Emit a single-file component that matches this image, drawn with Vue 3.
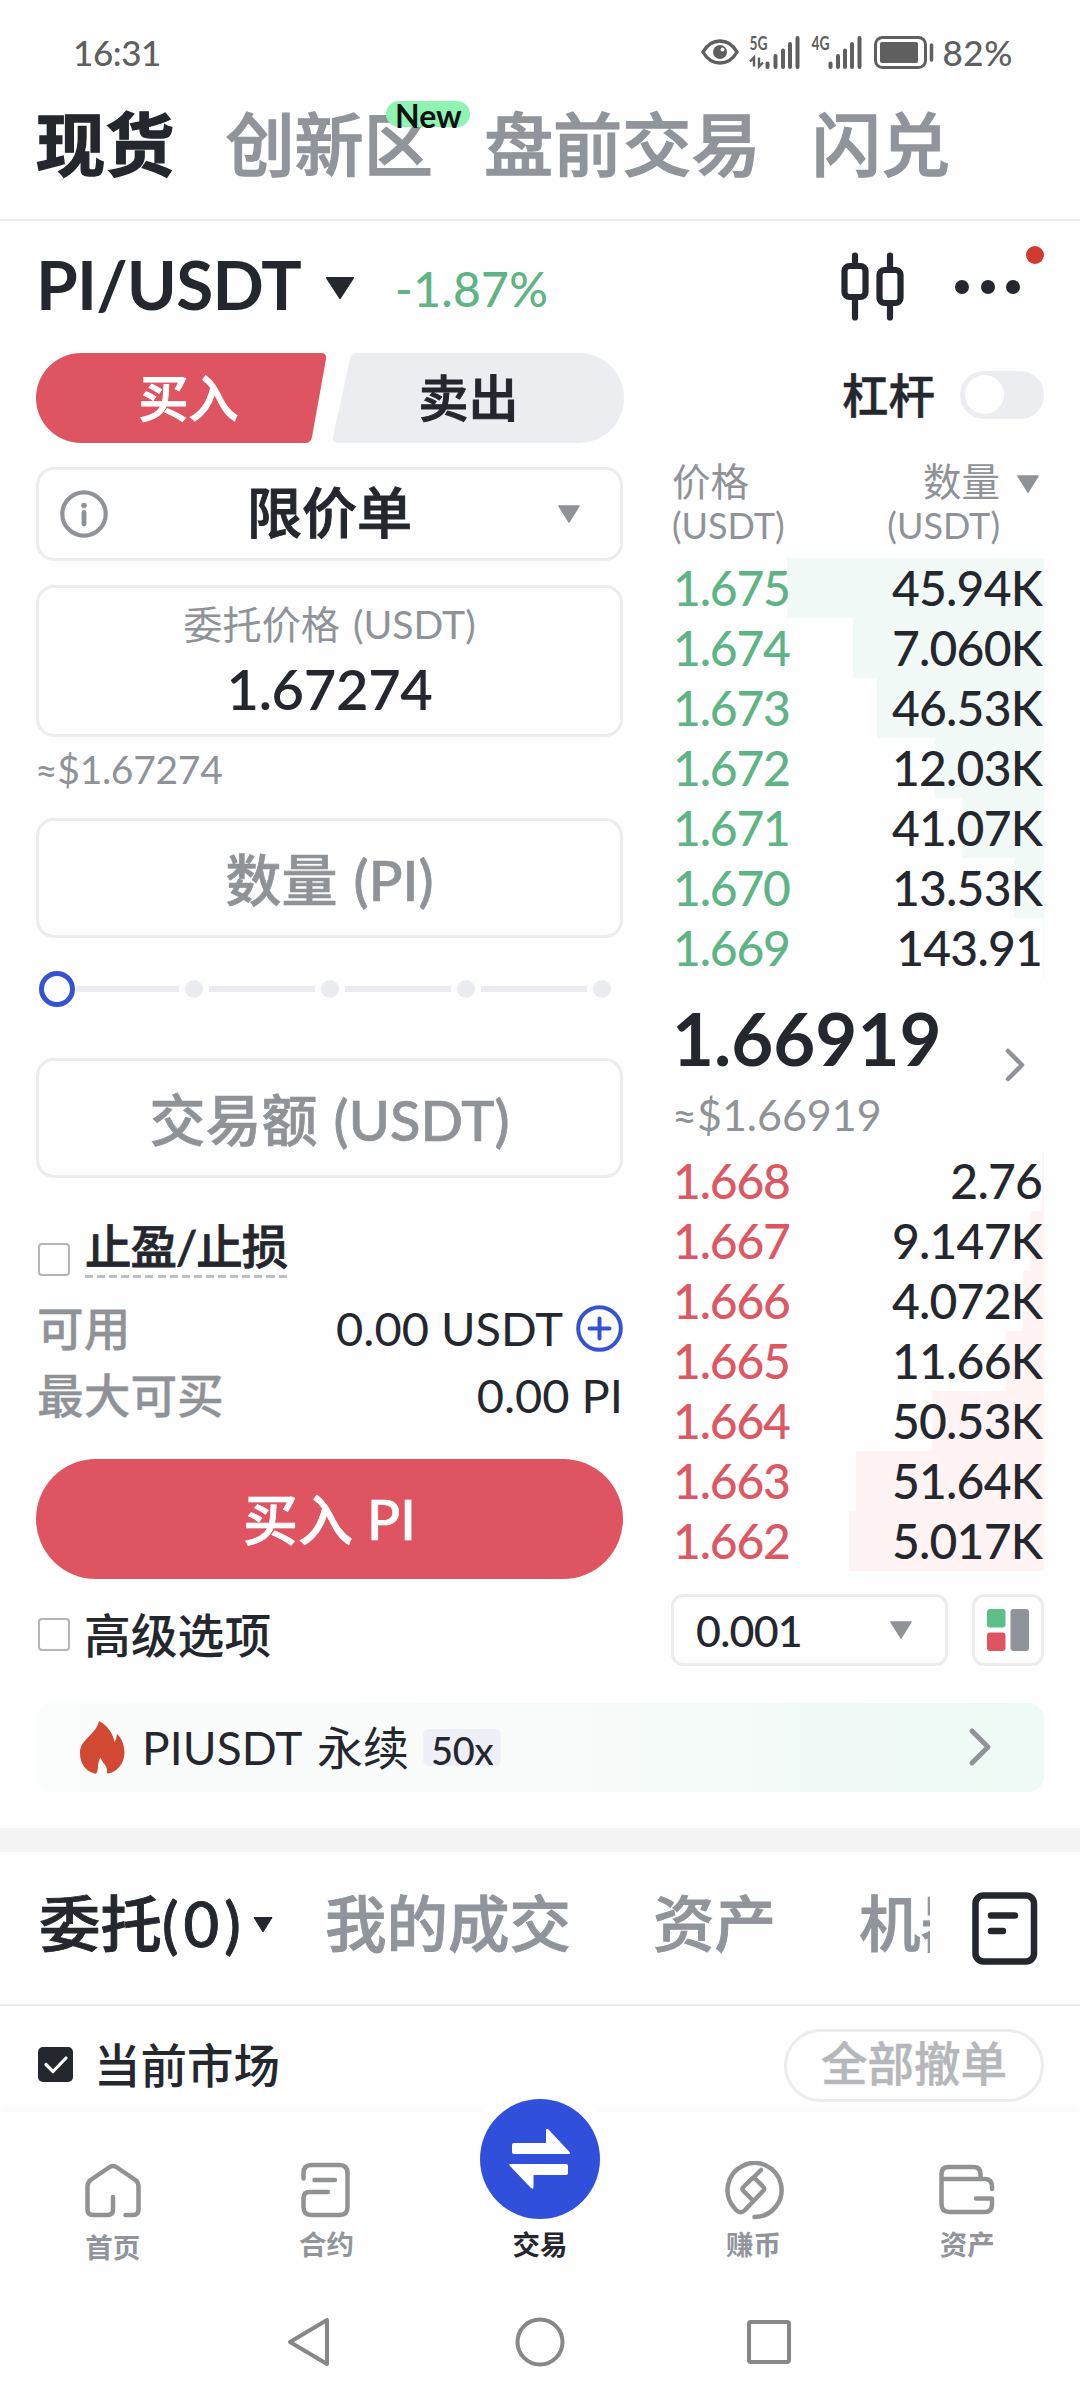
<script setup>
const marketTabs = [
  { label: '现货', active: true },
  { label: '创新区', badge: 'New' },
  { label: '盘前交易' },
  { label: '闪兑' },
]

const asks = [
  { price: '1.675', amount: '45.94K', depth: 257 },
  { price: '1.674', amount: '7.060K', depth: 191 },
  { price: '1.673', amount: '46.53K', depth: 167 },
  { price: '1.672', amount: '12.03K', depth: 109 },
  { price: '1.671', amount: '41.07K', depth: 82 },
  { price: '1.670', amount: '13.53K', depth: 30 },
  { price: '1.669', amount: '143.91', depth: 1 },
]

const bids = [
  { price: '1.668', amount: '2.76', depth: 2 },
  { price: '1.667', amount: '9.147K', depth: 14 },
  { price: '1.666', amount: '4.072K', depth: 21 },
  { price: '1.665', amount: '11.66K', depth: 38 },
  { price: '1.664', amount: '50.53K', depth: 112 },
  { price: '1.663', amount: '51.64K', depth: 188 },
  { price: '1.662', amount: '5.017K', depth: 195 },
]
</script>

<template>
  <div class="screen">
    <header class="status">
      <span class="clock">16:31</span>
      <div class="status-icons">
        <svg class="eye" width="38" height="26" viewBox="0 0 38 26">
          <path d="M2 13C6 6 12 2 19 2s13 4 17 11c-4 7-10 11-17 11S6 20 2 13z" fill="none" stroke="#5f5f5f" stroke-width="3.4" />
          <circle cx="19" cy="13" r="7" fill="#5f5f5f" />
          <circle cx="21.5" cy="10.5" r="2" fill="#fff" />
        </svg>
        <svg class="signal" width="51" height="33" viewBox="0 0 51 33">
          <text x="0.500" y="14" font-size="18" textLength="18" lengthAdjust="spacingAndGlyphs">5G</text>
          <path class="arrows" d="M1 25.500l4-4v9M10 21.500v9l4-4" />
          <path d="M18.500 27.500v3.500M26.500 20v11M34 14.500v16.500M41 8v23M48.500 2v29" />
        </svg>
        <svg class="signal second" width="51" height="33" viewBox="0 0 51 33">
          <text x="0.500" y="14" font-size="18" textLength="18" lengthAdjust="spacingAndGlyphs">4G</text>
          <path d="M19.500 27.500v3.500M27 20v11M34 14.500v16.500M41 8v23M48.500 2v29" />
        </svg>
        <svg class="battery" width="60" height="33" viewBox="0 0 60 33">
          <rect x="1.500" y="1.500" width="50" height="30" rx="7" fill="none" stroke="#5f5f5f" stroke-width="3" />
          <rect x="6" y="6" width="38" height="21" rx="2" fill="#5f5f5f" />
          <path d="M57.500 9v15" stroke="#5f5f5f" stroke-width="3.500" stroke-linecap="round" />
        </svg>
        <span class="pct">82%</span>
      </div>
    </header>

    <nav class="market-tabs">
      <span v-for="tab in marketTabs" :key="tab.label" class="market-tab" :class="{ active: tab.active }">
        {{ tab.label }}<em v-if="tab.badge" class="badge">{{ tab.badge }}</em>
      </span>
    </nav>

    <section class="pair">
      <h1>PI/USDT</h1>
      <svg class="pair-arrow" width="30" height="24" viewBox="0 0 30 24"><path d="M2 2h26L15 22z" fill="#25272e" stroke="#25272e" stroke-width="2" stroke-linejoin="round" /></svg>
      <span class="change">-1.87%</span>
      <svg class="candles" width="64" height="70" viewBox="0 0 64 70" fill="none" stroke="#25272e" stroke-width="6.200" stroke-linecap="round">
        <rect x="3.500" y="14" width="21" height="31" rx="5" />
        <rect x="38.500" y="18" width="21" height="33" rx="5" />
        <path d="M14 3.500v10M14 46v19.500M49 3.500v14M49 52v13.500" />
      </svg>
      <div class="more"><i></i><i></i><i></i><b></b></div>
    </section>

    <main class="trade">
      <div class="form">
        <div class="sides">
          <svg class="side-shape" width="588" height="90" viewBox="0 0 588 90">
            <path d="M45 0H285q6 0 5 6L276 84q-1 6-7 6H45A45 45 0 0 1 45 0z" fill="#df5461" />
            <path d="M320 0H543a45 45 0 0 1 0 90H302q-6 0-5-6L314 6q1-6 6-6z" fill="#ecedf1" />
          </svg>
          <span class="side buy">买入</span>
          <span class="side sell">卖出</span>
        </div>
        <div class="field order-type">
          <svg width="48" height="48" viewBox="0 0 48 48" fill="none" stroke="#8f9398" stroke-width="4.200">
            <circle cx="24" cy="24" r="21.700" />
            <path d="M24 22.500v11.500" stroke-width="4.800" stroke-linecap="round" />
            <circle cx="24" cy="15.500" r="2.800" fill="#8f9398" stroke="none" />
          </svg>
          <span>限价单</span>
          <svg class="caret" width="24" height="20" viewBox="0 0 24 20"><path d="M2 2h20L12 18z" /></svg>
        </div>
        <div class="field price">
          <label>委托价格 (USDT)</label>
          <strong>1.67274</strong>
        </div>
        <p class="approx">≈$1.67274</p>
        <div class="field input">数量 (PI)</div>
        <div class="slider">
          <i class="ring"></i>
          <template v-for="n in 4" :key="n"><i class="bar"></i><i class="stop"></i></template>
        </div>
        <div class="field input amount">交易额 (USDT)</div>
        <div class="tpsl"><i class="box"></i><span>止盈/止损</span></div>
        <div class="info">
          <span>可用</span>
          <b>0.00 USDT</b>
          <svg width="47" height="47" viewBox="0 0 47 47" fill="none" stroke="#3553d0" stroke-width="4" stroke-linecap="round">
            <circle cx="23.500" cy="23.500" r="21.300" />
            <path d="M13.500 23.500h20M23.500 13.500v20" />
          </svg>
        </div>
        <div class="info max"><span>最大可买</span><b>0.00 PI</b></div>
        <div class="submit">买入 PI</div>
        <div class="advanced"><i class="box"></i><span>高级选项</span></div>
      </div>

      <div class="book">
        <div class="margin"><span>杠杆</span><i class="switch"></i></div>
        <div class="book-head">
          <div>价格<small>(USDT)</small></div>
          <div class="right">数量<small>(USDT)</small></div>
          <svg class="caret" width="24" height="20" viewBox="0 0 24 20"><path d="M2 2h20L12 18z" /></svg>
        </div>
        <div v-for="row in asks" :key="row.price" class="row ask">
          <i class="depth" :style="{ width: row.depth + 'px' }"></i>
          <span>{{ row.price }}</span><b>{{ row.amount }}</b>
        </div>
        <div class="last">
          <div>
            <strong>1.66919</strong>
            <p>≈$1.66919</p>
          </div>
          <svg width="22" height="34" viewBox="0 0 22 34" fill="none" stroke="#8f9398" stroke-width="4.500" stroke-linecap="round" stroke-linejoin="round"><path d="M4 3l14 14L4 31" /></svg>
        </div>
        <div v-for="row in bids" :key="row.price" class="row bid">
          <i class="depth" :style="{ width: row.depth + 'px' }"></i>
          <span>{{ row.price }}</span><b>{{ row.amount }}</b>
        </div>
        <div class="book-foot">
          <div class="step">
            <span>0.001</span>
            <svg class="caret" width="24" height="20" viewBox="0 0 24 20"><path d="M2 2h20L12 18z" /></svg>
          </div>
          <div class="layout">
            <svg width="42" height="42" viewBox="0 0 42 42">
              <rect width="18.500" height="18.500" rx="3" fill="#5fbd87" />
              <rect y="23.500" width="18.500" height="18.500" rx="3" fill="#df5461" />
              <rect x="23.500" width="18.500" height="42" rx="3" fill="#8f949b" />
            </svg>
          </div>
        </div>
      </div>
    </main>

    <div class="perp">
      <svg width="46" height="54" viewBox="0 0 46 54">
        <path d="M20 0C28 4 34 12 35.500 21q2-3 2.500-8C43 17 45.500 25 45.500 32 45 43 38 51 29 52.500q-1.500 .5-1-1C29 45 24 43 21.500 36.500 18 42 20 48 17.500 52q-.5 1-2 .5C6 50 1 42 1 32 1 18 17 14 20 0z" fill="#d14833" />
      </svg>
      <span class="perp-name">PIUSDT 永续</span>
      <span class="lev">50x</span>
      <svg class="chev" width="24" height="40" viewBox="0 0 24 40" fill="none" stroke="#8f9398" stroke-width="5" stroke-linecap="round" stroke-linejoin="round"><path d="M4 4l16 16L4 36" /></svg>
    </div>

    <div class="band"></div>

    <section class="order-tabs">
      <div class="order-list">
        <span class="on">委托<em>(0)</em></span>
        <svg class="on-arrow" width="22" height="18" viewBox="0 0 22 18"><path d="M2 1.500h18L11 16z" fill="#25272e" stroke="#25272e" stroke-linejoin="round" /></svg>
        <span class="fills">我的成交</span>
        <span class="assets">资产</span>
        <span class="bots">机器人</span>
      </div>
      <svg width="66" height="73" viewBox="0 0 66 73" fill="none" stroke="#25272e" stroke-width="6.500" stroke-linecap="round">
        <rect x="3.500" y="3.500" width="58.500" height="66" rx="8" />
        <path d="M19 23.500h24M19 39h12" />
      </svg>
    </section>

    <section class="filter">
      <svg width="36" height="36" viewBox="0 0 36 36">
        <rect width="35" height="35" rx="5" fill="#25272e" />
        <path d="M8 17.500l7 7L28 11" fill="none" stroke="#fff" stroke-width="3.200" stroke-linecap="round" stroke-linejoin="round" />
      </svg>
      <span>当前市场</span>
      <div class="cancel">全部撤单</div>
    </section>

    <footer class="tabbar">
      <div class="tab home">
        <svg width="60" height="60" viewBox="0 0 60 60">
          <path d="M42.500 53.500H50q5.500 0 5.500-5.500V25q0-4-3-6.500L34 6q-4-3-8 0L7.500 18.500Q4.500 21 4.500 25v23q0 5.500 5.500 5.500h14.500q5.500 0 5.500-5.500V35.500" transform="translate(0 .5)" />
        </svg>
        <span>首页</span>
      </div>
      <div class="tab">
        <svg width="60" height="60" viewBox="0 0 60 60">
          <path d="M7.500 18.500V13q0-8 8-8h28q8 0 8 8v34q0 8-8 8h-28q-8 0-8-8V38q0-6 6-6h18.500M18.500 20H39" transform="translate(0 -1)" />
        </svg>
        <span>合约</span>
      </div>
      <div class="tab main">
        <i class="halo"></i>
        <div class="swap">
          <svg width="62" height="62" viewBox="0 0 62 62" fill="#fff">
            <path d="M5 15h32V2.500q0-3 2.500-1L60.500 24q1.500 2-1 2H5q-2 0-2-2v-7q0-2 2-2zM57 47H24.500v12q0 3-2.500 1L1 38q-2-2 .5-2H57q2 0 2 2v7q0 2-2 2z" />
          </svg>
        </div>
        <span>交易</span>
      </div>
      <div class="tab">
        <svg width="60" height="60" viewBox="0 0 60 60">
          <path d="M30.500 57A27 27 0 1 0 10 47.500c4 5.500 7.500 6 11 2.500L39 31q2.500-2 0-4.500l-7.500-7.500q-2-2-4 0L19.500 27q-2 2 0 4L28 39.500M28 19l9-9" transform="translate(0 -1)" />
        </svg>
        <span>赚币</span>
      </div>
      <div class="tab">
        <svg width="60" height="60" viewBox="0 0 60 60">
          <path d="M5 19V14q0-7 7-7h25q7 0 7 7v5M5 19h43q7.500 0 7.500 7.500V29M5 19v25q0 8 8 8h35q7.500 0 7.500-7.500V38.500h-16" transform="translate(-.5 -1)" />
        </svg>
        <span>资产</span>
      </div>
    </footer>

    <div class="sysnav">
      <svg width="44" height="50" viewBox="0 0 44 50"><path d="M40 3v44L3 25z" stroke-linejoin="round" /></svg>
      <svg class="circle" width="50" height="50" viewBox="0 0 50 50"><circle cx="25" cy="25" r="22.500" /></svg>
      <svg width="46" height="46" viewBox="0 0 46 46"><rect x="3" y="3" width="40" height="40" rx="2" /></svg>
    </div>
  </div>
</template>

<style>
body {
  margin: 0;
  background: #fefefe;
}
</style>

<style scoped>
.screen {
  width: 1080px;
  height: 2400px;
  overflow: hidden;
  background: #fefefe;
  color: #25272e;
  font-family: Lato, "Noto Sans CJK SC", sans-serif;
  font-weight: 500;
  white-space: nowrap;
}
.screen * { box-sizing: border-box; }
i, em { font-style: normal; }
svg { display: block; flex: none; }
p, h1 { margin: 0; }
b { font-weight: 500; }
.caret { fill: #8f9398; stroke: #8f9398; stroke-width: 1.5; stroke-linejoin: round; }

.status {
  height: 104px;
  padding: 0 67px 0 73px;
  display: flex;
  justify-content: space-between;
  align-items: center;
  color: #5f5f5f;
  font-size: 35px;
}
.clock { letter-spacing: -0.4px; }
.status-icons { display: flex; align-items: center; }
.signal { margin-left: 10px; overflow: visible; }
.signal.second { margin-left: 11px; }
.signal path { fill: none; stroke: #5f5f5f; stroke-width: 4; stroke-linecap: round; }
.signal .arrows { stroke-width: 2.4; stroke-linecap: butt; }
.signal text { fill: #5f5f5f; font-weight: 700; }
.battery { margin-left: 12px; }
.pct { margin-left: 8px; letter-spacing: 0.6px; }

.market-tabs {
  height: 117px;
  padding: 0 0 34px 36px;
  border-bottom: 2px solid #eeeeef;
  display: flex;
  align-items: center;
  gap: 51px;
}
.market-tab {
  position: relative;
  font-size: 69.2px;
  line-height: 83px;
  font-weight: 500;
  color: #90949b;
  -webkit-text-stroke: 1.3px;
}
.market-tab.active { font-weight: 700; color: #25272e; }
.badge {
  position: absolute;
  left: 161px;
  top: -2px;
  width: 84px;
  height: 26px;
  border-radius: 13px;
  background: #8ef4b3;
  color: #111;
  font-size: 32px;
  line-height: 30px;
  font-weight: 700;
  text-align: center;
  -webkit-text-stroke: 0;
}

.pair {
  height: 132px;
  padding-left: 36px;
  display: flex;
  align-items: center;
}
.pair h1 { font-size: 67.5px; line-height: 80px; font-weight: 700; width: 289px; margin-top: -6px; letter-spacing: -0.8px; }
.pair-arrow { margin-top: 2px; }
.change { margin-left: 40px; font-size: 48px; width: 446px; color: #5fb485; margin-top: 2px; letter-spacing: 0.3px; }
.more { position: relative; display: flex; gap: 11.5px; margin-left: 50px; }
.more i { width: 14px; height: 14px; border-radius: 50%; background: #25272e; }
.more b { position: absolute; left: 71px; top: -34px; width: 18px; height: 18px; border-radius: 50%; background: #d13a2f; }

.trade { display: flex; justify-content: space-between; padding: 0 36px; height: 1350px; }
.form { width: 587px; }
.book { width: 373px; }

.sides { display: flex; height: 90px; position: relative; font-size: 50px; line-height: 90px; -webkit-text-stroke: 1px; }
.side-shape { position: absolute; left: 0; top: 0; }
.side { position: relative; text-align: center; }
.side.buy { width: 305px; color: #fff; }
.side.sell { width: 255px; }

.field {
  border: 3px solid #ececec;
  border-radius: 18px;
  display: flex;
  align-items: center;
}
.order-type { height: 94px; margin-top: 24px; padding: 0 39px 0 21px; justify-content: space-between; font-size: 55px; -webkit-text-stroke: 1px; }
.order-type span { margin-left: -6px; line-height: 64px; margin-top: -4px; }
.price { height: 152px; margin-top: 24px; flex-direction: column; padding-top: 13px; }
.price label { font-size: 39.2px; line-height: 46px; font-weight: 400; color: #8f9398; word-spacing: 3px; }
.price strong { font-size: 56px; line-height: 60px; font-weight: 600; margin-top: 12px; letter-spacing: -0.3px; }
.approx { font-size: 39px; line-height: 46px; margin-top: 9px; margin-left: -1px; margin-bottom: -1px; font-weight: 400; color: #8f9398; letter-spacing: -0.3px; }
.input { height: 120px; justify-content: center; margin-top: 27px; padding-bottom: 4px; font-size: 56px; color: #8f9398; word-spacing: 2px; -webkit-text-stroke: 0.7px; }
.slider { height: 36px; margin: 33px 0; padding: 0 12px 0 3px; display: flex; align-items: center; }
.ring { width: 36px; height: 36px; border: 5px solid #3553d0; border-radius: 50%; }
.bar { flex: 1; height: 6px; background: #ebecf0; margin: 0 6px; }
.ring + .bar { flex: 0 0 103px; margin-left: 1px; }
.stop { width: 18px; height: 18px; border-radius: 50%; background: #ebecf0; }
.input.amount { margin-top: 51px; }

.box { width: 32px; height: 33px; border: 2px solid #b4b5b7; border-radius: 4px; }
.tpsl { display: flex; margin: 35px 0 0 2px; height: 65px; }
.tpsl .box { margin-top: 30px; }
.tpsl span {
  margin-left: 15px;
  font-size: 46.5px;
  letter-spacing: -1px;
  line-height: 67px;
  height: 65px;
  -webkit-text-stroke: 0.8px;
  background: repeating-linear-gradient(90deg, #bdbfc1 0 8px, transparent 8px 12.1px) 0 100% / 100% 3px no-repeat;
}
.info { display: flex; align-items: center; height: 60px; margin: 20px 0 0 1px; font-size: 46.7px; }
.info span { flex: 1; color: #8f9398; margin-top: -5px; -webkit-text-stroke: 0.3px; }
.info b { font-weight: 400; font-size: 47px; margin-top: -1px; }
.info svg { margin-left: 13px; }
.info.max { margin-top: 7px; }
.submit {
  margin-top: 34px;
  height: 120px;
  border-radius: 60px;
  background: #df5461;
  color: #fff;
  font-size: 55px;
  line-height: 121px;
  text-align: center;
  -webkit-text-stroke: 0.7px;
}
.advanced { display: flex; align-items: center; height: 60px; margin: 25px 0 0 2px; font-size: 46.8px; }
.advanced span { margin-left: 14px; margin-top: -4px; }

.margin { display: flex; align-items: center; justify-content: flex-end; height: 84px; font-size: 46.5px; }
.margin span { margin-top: -5px; -webkit-text-stroke: 0.5px; }
.switch { width: 84px; height: 48px; margin-left: 25px; border-radius: 24px; background: #ecedf1; padding: 4px 5px; }
.switch::before { content: ""; display: block; width: 39px; height: 39px; border-radius: 50%; background: #fefefe; }
.book-head { display: flex; height: 121px; padding: 22px 0 0 1px; color: #8f9398; font-size: 38.5px; line-height: 44px; font-weight: 400; }
.book-head small { display: block; font-size: 36px; }
.book-head .right { margin-left: auto; text-align: right; }
.book-head .caret { margin: 15px 4px 0 16px; }
.row { position: relative; height: 60px; display: flex; justify-content: space-between; padding: 0 2px 0 2px; font-size: 48px; line-height: 59px; }
.row span { position: relative; letter-spacing: -1.2px; }
.row b { position: relative; letter-spacing: -0.8px; }
.depth { position: absolute; right: 0; top: 0; height: 60px; }
.ask span { color: #5fb485; }
.ask .depth { background: #f1faf7; }
.bid span { color: #dc5863; }
.bid .depth { background: #fff3f4; }
.last { height: 173px; display: flex; justify-content: space-between; padding: 0 18px 0 1px; }
.last svg { margin-top: 70px; }
.last strong { display: block; font-size: 72.5px; line-height: 80px; margin-top: 20px; font-weight: 700; }
.last p { font-size: 43px; line-height: 50px; margin-top: 12px; font-weight: 400; color: #8f9398; }
.book-foot { display: flex; justify-content: space-between; margin-top: 23px; }
.step { width: 277px; height: 72px; border: 3px solid #ececec; border-radius: 12px; display: flex; align-items: center; justify-content: space-between; padding: 0 32px 0 22px; font-size: 43px; letter-spacing: -0.8px; }
.layout { width: 72px; height: 72px; border: 3px solid #ececec; border-radius: 12px; display: flex; align-items: center; justify-content: center; }

.perp {
  height: 89px;
  margin: 0 36px;
  padding: 0 52px 0 43px;
  border-radius: 16px;
  background: linear-gradient(90deg, #fbfdfc, #f8fbfa 45%, #eefaf5);
  display: flex;
  align-items: center;
}
.perp-name { margin-left: 17px; margin-top: -5px; font-size: 46px; font-weight: 400; word-spacing: 4px; letter-spacing: 0.1px; }
.lev { margin-left: 14px; width: 78px; height: 37px; border-radius: 6px; background: #efeff7; text-align: center; font-size: 38px; line-height: 42px; letter-spacing: -0.3px; }
.chev { margin-left: auto; margin-top: -2px; }
.band { height: 24px; margin-top: 36px; background: #f4f4f5; }

.order-tabs { height: 154px; border-bottom: 2px solid #ececed; padding: 0 42px 0 39px; display: flex; align-items: center; justify-content: space-between; }
.order-list { display: flex; align-items: center; width: 891px; overflow: hidden; font-size: 61.5px; line-height: 76px; color: #90949b; margin-top: -10px; -webkit-text-stroke: 0.9px; }
.order-list > * { flex: none; }
.order-list .on { color: #25272e; width: 213px; }
.on-arrow { margin-top: 3px; }
.on em { letter-spacing: 5px; }
.fills { margin-left: 51px; }
.assets { margin-left: 82px; }
.bots { margin-left: 83px; }
.filter { height: 106px; padding: 12px 36px 0 38px; display: flex; align-items: center; font-size: 46.5px; }
.filter span { margin-left: 20px; margin-top: -5px; }
.cancel { margin-left: auto; width: 260px; height: 73px; border: 3px solid #ececec; border-radius: 37px; text-align: center; line-height: 63px; color: #b5b7ba; -webkit-text-stroke: 0.5px; }

.tabbar { height: 180px; padding: 0 6px 0 4px; display: flex; box-shadow: 0 -4px 10px rgba(0, 0, 0, .02); }
.tab { flex: 1; display: flex; flex-direction: column; align-items: center; padding-top: 49px; font-size: 27.5px; line-height: 34px; font-weight: 700; color: #90949b; }
.tab > svg { fill: none; stroke: #909294; stroke-width: 4.5; stroke-linecap: round; stroke-linejoin: round; }
.tab span { margin-top: 7px; }
.tab.home { padding-left: 2px; }
.tab.home span { margin-top: 10px; }
.tab.main { position: relative; padding-top: 0; color: #25272e; }
.halo { position: absolute; width: 150px; height: 150px; top: -28px; border-radius: 50%; background: #fefefe; clip-path: inset(0 0 60px 0); }
.swap { position: relative; margin-top: -13px; width: 120px; height: 120px; border-radius: 50%; background: #3050dc; display: flex; align-items: center; justify-content: center; }
.tab.main span { margin-top: 9px; }

.sysnav { height: 100px; padding: 0 288px 0 287px; display: flex; align-items: center; justify-content: space-between; }
.sysnav svg { fill: none; stroke: #878787; stroke-width: 4; }
.sysnav .circle { margin-left: 2px; }
</style>
